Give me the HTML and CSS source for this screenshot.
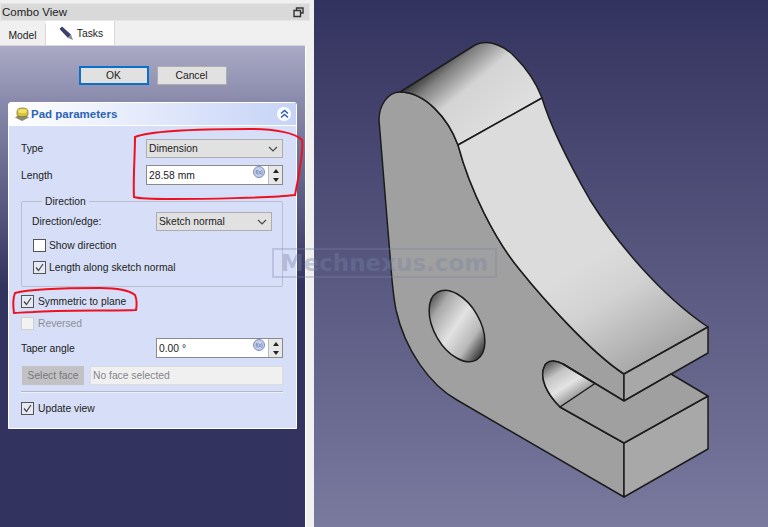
FILE: index.html
```html
<!DOCTYPE html>
<html lang="en">
<head>
  <meta charset="UTF-8">
  <meta name="viewport" content="width=device-width, initial-scale=1.0">
  <title>Combo View</title>
  <link rel="stylesheet" href="styles.css">
</head>
<body>
  <div class="app">
    <div class="combo">
      <div class="title">
        <span>Combo View</span>
        <svg class="float-icon" width="11" height="11" viewBox="0 0 11 11"><path d="M3.5 3V1h6.500v5H7.500M1 3.500h6.500V9.500H1z" fill="none" stroke="#333" stroke-width="1.400"/></svg>
      </div>
      <div class="tabs">
        <div class="tab">Model</div>
        <div class="tab tab-active">
          <svg width="15" height="15" viewBox="0 0 15 15"><path d="M0.500 3 3 0.500l9 8-3 3.500z" fill="#3a3f6b"/><path d="M9 12l3-3.500 2 5.500z" fill="#8a8aa0"/></svg>
          Tasks
        </div>
      </div>
      <div class="pane">
        <div class="buttons">
          <div class="btn btn-default">OK</div>
          <div class="btn">Cancel</div>
        </div>
        <div class="box">
          <div class="box-head">
            <svg width="16" height="15" viewBox="0 0 16 15"><path d="M1 10.500 4 8.500h8l3 2-7 3.500z" fill="#8c8a70"/><path d="M3 4.500C3 2 5.500 1 8.500 1S14 2 14 4.500V8c-2 2-8.500 2.500-11 0z" fill="#d8c53a" stroke="#77702a" stroke-width=".7"/><ellipse cx="8.500" cy="4" rx="4.500" ry="2" fill="#efe16a"/></svg>
            <span class="box-title">Pad parameters</span>
            <span class="collapse">
              <svg width="9" height="10" viewBox="0 0 9 10"><path d="M1 4.500 4.500 1.500 8 4.500M1 8.500 4.500 5.500 8 8.500" fill="none" stroke="#2a5fb0" stroke-width="1.500"/></svg>
            </span>
          </div>
          <div class="box-body">
            <div class="row row-type">
              <span>Type</span>
              <div class="select select-wide">Dimension<svg width="10" height="6" viewBox="0 0 10 6"><path d="M1 1l4 4 4-4" fill="none" stroke="#444" stroke-width="1.100"/></svg></div>
            </div>
            <div class="row row-length">
              <span>Length</span>
              <div class="spin spin-wide">
                <span class="spin-value">28.58 mm</span>
                <span class="expr">f(x)</span>
                <span class="arrows"><i class="up"></i><i class="down"></i></span>
              </div>
            </div>
            <fieldset class="group">
              <legend>Direction</legend>
              <div class="row row-dir">
                <span>Direction/edge:</span>
                <div class="select select-dir">Sketch normal<svg width="10" height="6" viewBox="0 0 10 6"><path d="M1 1l4 4 4-4" fill="none" stroke="#444" stroke-width="1.100"/></svg></div>
              </div>
              <div class="check check-show"><span class="cb cb-white"></span>Show direction</div>
              <div class="check check-along"><span class="cb"><svg width="11" height="11" viewBox="0 0 11 11"><path d="M2 5.500l2.500 3L9 2" fill="none" stroke="#444" stroke-width="1.200"/></svg></span>Length along sketch normal</div>
            </fieldset>
            <div class="check check-sym"><span class="cb"><svg width="11" height="11" viewBox="0 0 11 11"><path d="M2 5.500l2.500 3L9 2" fill="none" stroke="#444" stroke-width="1.200"/></svg></span>Symmetric to plane</div>
            <div class="check check-rev disabled"><span class="cb cb-off"></span>Reversed</div>
            <div class="row row-taper">
              <span>Taper angle</span>
              <div class="spin spin-taper">
                <span class="spin-value">0.00 °</span>
                <span class="expr">f(x)</span>
                <span class="arrows"><i class="up"></i><i class="down"></i></span>
              </div>
            </div>
            <div class="row row-face">
              <div class="face-btn">Select face</div>
              <div class="face-field">No face selected</div>
            </div>
            <div class="rule"></div>
            <div class="check check-update"><span class="cb"><svg width="11" height="11" viewBox="0 0 11 11"><path d="M2 5.500l2.500 3L9 2" fill="none" stroke="#444" stroke-width="1.200"/></svg></span>Update view</div>
          </div>
        </div>
      </div>
    </div>

    <div class="view">
      <svg class="part" width="454" height="527" viewBox="314 0 454 527">
        <defs>
          <linearGradient id="bandShade" gradientUnits="userSpaceOnUse" x1="434" y1="66" x2="490" y2="132">
            <stop offset="0" stop-color="#3f3f3f"/>
            <stop offset=".15" stop-color="#808080"/>
            <stop offset=".45" stop-color="#d4d4d4"/>
            <stop offset="1" stop-color="#dedede"/>
          </linearGradient>
          <linearGradient id="faceShade" gradientUnits="userSpaceOnUse" x1="590" y1="260" x2="655" y2="365">
            <stop offset="0" stop-color="#dcdcdc"/>
            <stop offset=".35" stop-color="#d2d2d2"/>
            <stop offset="1" stop-color="#a4a4a4"/>
          </linearGradient>
          <linearGradient id="holeShade" gradientUnits="userSpaceOnUse" x1="441" y1="292" x2="473" y2="358">
            <stop offset="0" stop-color="#555"/>
            <stop offset=".18" stop-color="#a8a8a8"/>
            <stop offset=".5" stop-color="#e2e2e2"/>
            <stop offset=".78" stop-color="#b8b8b8"/>
            <stop offset="1" stop-color="#3c3c3c"/>
          </linearGradient>
          <linearGradient id="slotShade" gradientUnits="userSpaceOnUse" x1="552" y1="362" x2="575" y2="398">
            <stop offset="0" stop-color="#666"/>
            <stop offset=".3" stop-color="#c4c4c4"/>
            <stop offset=".65" stop-color="#e4e4e4"/>
            <stop offset="1" stop-color="#999"/>
          </linearGradient>
        </defs>
        <g stroke="#1c1c1c" stroke-width="1.500" stroke-linejoin="round">
          <path fill="#a0a0a0" d="M379 120C379 105 388 92 400 92C425 92 448 118 458 145C470 190 495 240 520 270C540 295 590 352 624 374L624 401L563 364C555 360 548 360 545 365C538 378 548 395 560 407L624 443L624 497L457 400C430 385 405 350 396 310C394 300 393 290 392 280z"/>
          <path fill="url(#bandShade)" d="M400 92L475 45C490 38 507 48 515 57C528 70 537 85 542 98L458 145C448 118 425 92 400 92z"/>
          <path fill="url(#faceShade)" d="M458 145L542 98C550 125 570 165 590 200C615 240 660 295 708 327L624 374C590 352 540 295 520 270C495 240 470 190 458 145z"/>
          <path fill="#a8a8a8" d="M624 374L708 327V353L624 401z"/>
          <path fill="#a8a8a8" d="M624 443L708 396V449L624 497z"/>
          <path fill="#a0a0a0" stroke="none" d="M560 407L595 383L624 401L671 374L708 396L624 443z"/>
          <path fill="url(#slotShade)" d="M563 364L595 383.500L560 407C548 395 538 378 545 365C548 360 555 360 563 364z"/>
          <path fill="none" d="M563 364L624 401L671 374L708 396L624 443L560 407"/>
          <ellipse cx="457" cy="326" rx="23" ry="39" transform="rotate(-30 457 326)" fill="url(#holeShade)"/>
        </g>
      </svg>
    </div>

    <svg class="marks" width="320" height="330" viewBox="0 0 320 330">
      <path d="M135 137C150 131 190 129 250 129C275 129 296 133 302 140C304 150 298 180 295 195C270 198 200 199 173 199C155 199 140 199 134 197C133 180 135 155 135 137z" fill="none" stroke="#ee1122" stroke-width="2"/>
      <path d="M15 293C30 289 70 288 100 288C118 288 130 291 135 295C137 300 137 305 136 310C110 311 60 310 33 312C25 312 18 313 14 313C13 306 13 298 15 293z" fill="none" stroke="#ee1122" stroke-width="2"/>
    </svg>
    <div class="watermark">Mechnexus.com</div>
  </div>
</body>
</html>
```

FILE: styles.css
```css
* {
  margin: 0;
  padding: 0;
  box-sizing: border-box;
}
html, body {
  width: 768px;
  height: 527px;
  overflow: hidden;
}
body {
  font-family: "Liberation Sans", Arial, sans-serif;
  font-size: 10.3px;
  color: #222;
  background-color: #f0f0f0;
}
.app {
  position: relative;
  display: flex;
  width: 768px;
  height: 527px;
}

/* left dock */
.combo {
  width: 314px;
  height: 527px;
  padding-top: 3px;
  display: flex;
  flex-direction: column;
  background-color: #f0f0f0;
}
.title {
  display: flex;
  align-items: center;
  justify-content: space-between;
  width: 310px;
  height: 18px;
  padding: 0 5px 0 1px;
  font-size: 11.500px;
  background-color: #d9d9d9;
  border: 1px solid #e6e6e6;
}
.tabs {
  display: flex;
  align-items: flex-end;
  height: 24px;
}
.tab {
  display: flex;
  align-items: center;
  justify-content: center;
  width: 46px;
  height: 21px;
  padding-top: 2px;
  border-right: 1px solid #d8d8d8;
  background-color: #f0f0f0;
}
.tab-active {
  width: 69px;
  height: 24px;
  padding: 0 0 0 2px;
  gap: 3px;
  background-color: #fff;
}
.pane {
  flex: 1;
  width: 306px;
  padding: 20px 8px 0 8px;
  border-top: 1px solid #d8d8d8;
  border-right: 1px solid #fff;
  background: linear-gradient(#aaaac6 0, #8a8aac 54px, #33335f 240px, #33335f 100%);
}
.buttons {
  display: flex;
  justify-content: center;
  gap: 8px;
}
.btn {
  width: 70px;
  height: 19px;
  line-height: 17px;
  text-align: center;
  background-color: #e1e1e1;
  border: 1px solid #adadad;
}
.btn-default {
  border: 2px solid #0a70c8;
  line-height: 15px;
}

/* task box */
.box {
  width: 289px;
  height: 327px;
  margin-top: 17px;
  border: 1px solid #fff;
  border-radius: 3px 3px 0 0;
  background-color: #d6dff7;
}
.box-head {
  display: flex;
  align-items: center;
  height: 23px;
  padding: 0 5px;
  gap: 1px;
  background: linear-gradient(90deg, #fff, #c6d3f7);
  border-bottom: 1px solid #fff;
}
.box-title {
  flex: 1;
  font-size: 11.500px;
  font-weight: 700;
  color: #2a62b8;
}
.collapse {
  display: flex;
  align-items: center;
  justify-content: center;
  width: 14px;
  height: 14px;
  border-radius: 50%;
  background-color: #fff;
}
.box-body {
  padding: 0 13px 0 12px;
}
.row {
  display: flex;
  align-items: center;
  justify-content: space-between;
}
.row-type {
  margin-top: 13px;
}
.row-length {
  margin-top: 7px;
}
.select {
  display: flex;
  align-items: center;
  justify-content: space-between;
  height: 19px;
  padding: 0 4px 0 2px;
  background-color: #e1e1e1;
  border: 1px solid #adadad;
}
.select-wide {
  width: 137px;
}
.select-dir {
  width: 116px;
}
.spin {
  display: flex;
  align-items: center;
  height: 20px;
  background-color: #fff;
  border: 1px solid #8a8a8a;
}
.spin-wide {
  width: 137px;
}
.spin-taper {
  width: 127px;
}
.spin-value {
  flex: 1;
  padding-left: 2px;
}
.expr {
  width: 12px;
  height: 12px;
  margin: -7px 3px 0 0;
  border-radius: 50%;
  border: 1px solid #7a8fc0;
  background-color: #c5cfe8;
  color: #3a5aa8;
  font-size: 5px;
  line-height: 10px;
  text-align: center;
}
.arrows {
  display: flex;
  flex-direction: column;
  width: 14px;
  height: 18px;
  background-color: #e8e8e8;
  border-left: 1px solid #bbb;
}
.arrows i {
  flex: 1;
  display: flex;
  align-items: center;
  justify-content: center;
}
.arrows i::before {
  content: "";
  border-left: 3px solid transparent;
  border-right: 3px solid transparent;
}
.arrows .up::before {
  border-bottom: 4px solid #222;
}
.arrows .down::before {
  border-top: 4px solid #222;
}
.group {
  height: 92px;
  margin: 10px 0 0 0;
  padding: 0 10px 0 10px;
  border: 1px solid #b9bfd0;
  border-radius: 2px;
}
.group legend {
  margin-left: 10px;
  padding: 0 3px;
  line-height: 13px;
}
.row-dir {
  margin-top: 4px;
}
.check {
  display: flex;
  align-items: center;
  gap: 4px;
  height: 14px;
}
.cb {
  display: flex;
  align-items: center;
  justify-content: center;
  width: 13px;
  height: 13px;
  background-color: #e6e9f3;
  border: 1px solid #555;
}
.cb-white {
  background-color: #fff;
}
.cb-off {
  background-color: #f2f2f2;
  border-color: #d0d0d0;
}
.disabled {
  color: #8e8e96;
}
.check-show {
  margin: 7px 0 0 1px;
  gap: 3px;
}
.check-along {
  margin: 8px 0 0 1px;
  gap: 3px;
}
.check-sym {
  margin-top: 7px;
}
.check-rev {
  margin-top: 8px;
}
.row-taper {
  margin-top: 8px;
}
.row-face {
  margin: 8px 0 0 1px;
  gap: 6px;
}
.face-btn {
  width: 62px;
  height: 19px;
  line-height: 19px;
  text-align: center;
  color: #77777c;
  background-color: #c2c2c4;
}
.face-field {
  flex: 1;
  height: 19px;
  line-height: 17px;
  padding-left: 2px;
  color: #85858a;
  background-color: #f0f0f0;
  border: 1px solid #dcdcdc;
}
.rule {
  height: 2px;
  margin-top: 6px;
  background-color: #b4b8c6;
  border-bottom: 1px solid #eef0f8;
}
.check-update {
  margin-top: 8px;
}

/* 3D view */
.view {
  width: 454px;
  height: 527px;
  background: linear-gradient(#33335f, #7a7a9f);
}
.part {
  display: block;
}

/* things drawn over both panels */
.marks {
  position: absolute;
  left: 0;
  top: 0;
}
.watermark {
  position: absolute;
  left: 272px;
  top: 248px;
  width: 225px;
  height: 30px;
  border: 2px solid rgba(120, 130, 165, 0.3);
  font-family: "DejaVu Sans", sans-serif;
  font-size: 23px;
  font-weight: 700;
  line-height: 26px;
  text-align: center;
  color: rgba(120, 130, 165, 0.4);
}
```
